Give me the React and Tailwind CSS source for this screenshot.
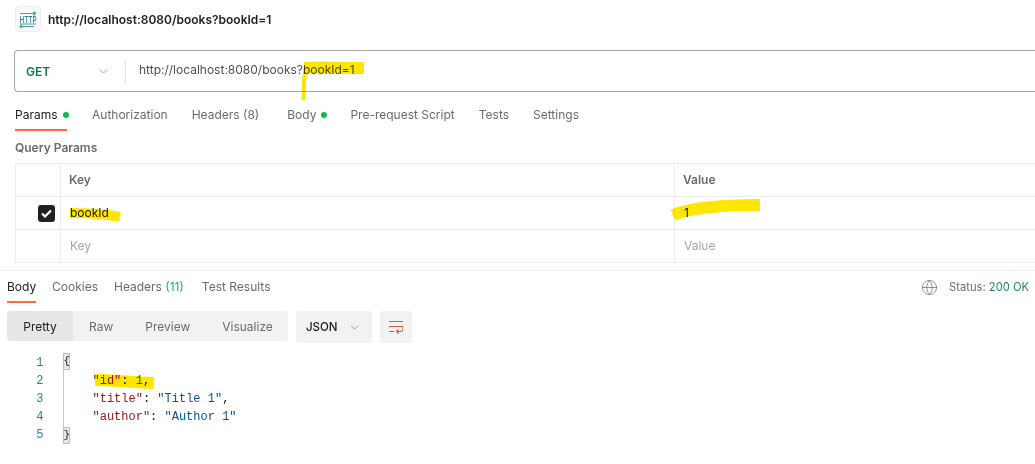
import { ChevronDown, Globe } from "lucide-react";

const Dot = () => <span className="ml-[5px] inline-block h-[6px] w-[6px] rounded-full bg-[#0cbb52]" />;

function HttpIcon() {
  return (
    <div className="h-[26px] w-[26px] rounded-[4px] border border-[#ededed] bg-[#f9f9f9]">
      <svg width="24" height="24" viewBox="0 0 24 24" fill="none" stroke="#4b9cab" className="overflow-visible">
        <path d="M4 6.5h16M17.5 4.5l2 2-2 2" strokeWidth="1.2" />
        <path d="M4 17h16M4 19.5h14M6 18l-2 1.5 2 1.5" strokeWidth="1.2" />
        <text x="12" y="15.5" textAnchor="middle" fontSize="9.5" fontWeight="500" stroke="none" fill="#1f7f92" fontFamily="Inter, sans-serif" textLength="17" lengthAdjust="spacingAndGlyphs">HTTP</text>
      </svg>
    </div>
  );
}

function WrapIcon() {
  return (
    <svg width="14" height="15" viewBox="0 0 14 15" fill="none" stroke="#e0592f" strokeWidth="1.1">
      <path d="M0 1.5h14M0 6.5h14M0 11.5h5" />
      <path d="M14 6.5v2.5a2.5 2.5 0 0 1-2.5 2.5H7.5M9.5 9.5l-2 2 2 2" />
    </svg>
  );
}

function ParamRow({ keyText, valueText, keyClass, valueClass, checked, bottom }) {
  return (
    <div className={`flex h-[33px] ${bottom ? "pb-px" : "border-b border-[#ededed]"}`}>
      <div className="flex w-[45px] items-center justify-end border-r border-[#ededed] pr-[5px]">
        {checked && (
          <span className="flex h-[17px] w-[17px] items-center justify-center rounded-[3px] bg-[#212121]">
            <svg width="11" height="9" viewBox="0 0 11 9" fill="none" stroke="white" strokeWidth="2.2">
              <path d="M1 4.5l3 3 6-6" />
            </svg>
          </span>
        )}
      </div>
      <div className={`flex w-[614px] items-center border-r border-[#ededed] pl-[9px] ${keyClass}`}>{keyText}</div>
      <div className={`flex flex-1 items-center pl-[9px] ${valueClass}`}>{valueText}</div>
    </div>
  );
}

export default function App() {
  return (
    <div className="relative h-[464px] w-[1035px] overflow-hidden bg-white font-['Inter',sans-serif] text-[12px] text-[#6b6b6b]">
      {/* ===== TITLE ===== */}
      <div className="flex h-[50px] items-start pl-[15px] pt-[6px]">
        <HttpIcon />
        <span className="ml-[7px] mt-[6px] text-[12px] font-semibold leading-[16px] text-[#212121]">http://localhost:8080/books?bookId=1</span>
      </div>

      {/* ===== URL BAR ===== */}
      <div className="ml-[14px] flex h-[42px] items-center rounded-l-[4px] border border-r-0 border-[#a6a6a6] pt-px">
        <span className="ml-[11px] w-[71px] font-semibold text-[#097a4a]">GET</span>
        <ChevronDown size={13} strokeWidth={1.2} className="text-[#6b6b6b]" />
        <span className="ml-[15px] h-[24px] w-px bg-[#e0e0e0]" />
        <span className="mb-[3px] ml-[13px] text-[#505050]">http://localhost:8080/books?bookId=1</span>
      </div>

      {/* ===== REQUEST TABS ===== */}
      <div className="ml-[15px] mt-[14px] flex h-[25px] items-start leading-[18px]">
        <div className="flex h-[25px] w-[52px] items-start border-b-2 border-[#ff6c37] text-[#212121]">
          <span className="flex items-center">Params<Dot /></span>
        </div>
        <span className="ml-[25px]">Authorization</span>
        <span className="ml-[24px]">Headers <span>(8)</span></span>
        <span className="ml-[28px] flex items-center">Body<Dot /></span>
        <span className="ml-[23px]">Pre-request Script</span>
        <span className="ml-[24px]">Tests</span>
        <span className="ml-[24px]">Settings</span>
      </div>

      {/* ===== QUERY PARAMS ===== */}
      <div className="ml-[15px] mt-[9px] h-[23px] font-semibold leading-[16px]">Query Params</div>
      <div className="ml-[15px] h-[100px] border-y border-l border-[#ededed]">
        <div className="flex h-[33px] border-b border-[#ededed] font-semibold">
          <div className="w-[45px] border-r border-[#ededed]" />
          <div className="flex w-[614px] items-center border-r border-[#ededed] pl-[8px]">Key</div>
          <div className="flex flex-1 items-center pl-[8px]">Value</div>
        </div>
        <ParamRow checked keyText="bookId" valueText="1" keyClass="text-[#212121]" valueClass="text-[#212121]" />
        <ParamRow bottom keyText="Key" valueText="Value" keyClass="text-[#a6a6a6]" valueClass="text-[#a6a6a6]" />
      </div>

      <div className="mt-[7px] h-px bg-[#ededed]" />

      {/* ===== RESPONSE TABS ===== */}
      <div className="flex h-[32px] items-start pl-[7px] pt-[7px] leading-[18px]">
        <div className="h-[25px] w-[29px] border-b-2 border-[#ff6c37] text-[#212121]">Body</div>
        <span className="ml-[16px]">Cookies</span>
        <span className="ml-[16px]">Headers <span className="text-[#0cbb52]">(11)</span></span>
        <span className="ml-[18px]">Test Results</span>
        <div className="ml-auto flex items-center pr-[6px]">
          <Globe size={17} strokeWidth={1} className="mr-[11px] text-[#6b6b6b]" />
          <span className="text-[11.2px]">Status: <span className="text-[#1f8a62]">200 OK</span></span>
        </div>
      </div>

      {/* ===== RESPONSE TOOLBAR ===== */}
      <div className="ml-[7px] mt-[8px] flex h-[32px] items-start">
        <div className="flex h-[30px] w-[281px] items-center rounded-[4px] bg-[#f2f2f2]">
          <span className="flex h-[30px] w-[66px] items-center justify-center rounded-l-[4px] bg-[#e6e6e6] pt-px text-[#212121]">Pretty</span>
          <span className="ml-[16px] pt-px">Raw</span>
          <span className="ml-[32px] pt-px">Preview</span>
          <span className="ml-[32px] pt-px">Visualize</span>
        </div>
        <div className="ml-[8px] flex h-[32px] w-[76px] items-center rounded-[4px] bg-[#f2f2f2] pl-[10px] pt-px text-[11.5px] font-medium text-[#212121]">
          JSON
          <ChevronDown size={13} strokeWidth={1.2} className="ml-[10px] text-[#6b6b6b]" />
        </div>
        <div className="ml-[8px] flex h-[32px] w-[32px] items-center justify-center rounded-[4px] bg-[#f2f2f2]">
          <WrapIcon />
        </div>
      </div>

      {/* ===== CODE ===== */}
      <div className="mt-[10px] flex font-['Liberation_Mono',monospace] text-[12px] leading-[18px]">
        <div className="w-[43.5px] pt-px text-right text-[#2a7fa5]">
          <div>1</div><div>2</div><div>3</div><div>4</div><div>5</div>
        </div>
        <div className="relative ml-[19px] border-l border-[#c8c8c8] pl-[29px] pt-px text-[#212121]">
          <div className="absolute left-[-1px] top-0 h-[17px] w-[7px] border border-[#bdbdbd] bg-[#e6e6e6] text-[11px] leading-[15px]">{"{"}</div>
          <div className="h-[18px]" />
          <div><span className="text-[#a31515]">"id"</span>: <span className="text-[#098658]">1</span>,</div>
          <div><span className="text-[#a31515]">"title"</span>: <span className="text-[#0451a5]">"Title 1"</span>,</div>
          <div><span className="text-[#a31515]">"author"</span>: <span className="text-[#0451a5]">"Author 1"</span></div>
          <div className="absolute bottom-0 left-[-1px] h-[17px] w-[7px] border border-[#bdbdbd] bg-[#e6e6e6] text-[11px] leading-[15px]">{"}"}</div>
          <div className="h-[18px]" />
        </div>
      </div>

      {/* ===== YELLOW MARKER ===== */}
      <svg className="pointer-events-none absolute left-0 top-0 mix-blend-multiply" width="1035" height="464" fill="none" stroke="#ffe600" strokeLinecap="butt">
        <path d="M303.5 100 C303.5 85 304 72 307 64" strokeWidth="4" />
        <path d="M304 68 C320 67 340 68 364 68" strokeWidth="12" />
        <path d="M70 213 C85 213 105 214 120 217" strokeWidth="10" />
        <path d="M673 215 C690 208 720 205 760 205" strokeWidth="12" />
        <path d="M95 380 C110 380 130 382 154 383" strokeWidth="12" />
      </svg>
    </div>
  );
}
